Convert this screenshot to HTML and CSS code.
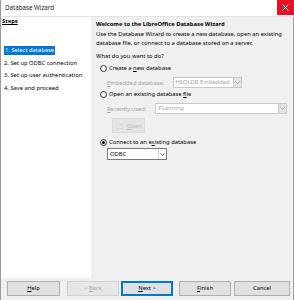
FILE: index.html
```html
<!DOCTYPE html>
<html>
<head>
<meta charset="utf-8">
<link rel="stylesheet" href="styles.css">
</head>
<body>
<div class="win">
  <div class="titlebar">
    <span class="title">Database Wizard</span>
    <div class="close"><svg width="7" height="7" viewBox="0 0 7 7"><path d="M0.5 0.5L6.5 6.5M6.5 0.5L0.5 6.5" stroke="#fff" stroke-width="1"/></svg></div>
  </div>
  <div class="main">
    <div class="steps">
      <div class="steps-h">Steps</div>
      <div class="step-list">
        <div class="step"><span class="sel">1. Select database</span></div>
        <div class="step">2. Set up ODBC connection</div>
        <div class="step">3. Set up user authentication</div>
        <div class="step">4. Save and proceed</div>
      </div>
    </div>
    <div class="page">
      <div class="h1">Welcome to the LibreOffice Database Wizard</div>
      <div class="desc">Use the Database Wizard to create a new database, open an existing database file, or connect to a database stored on a server.</div>
      <div class="what">What do you want to do?</div>
      <div class="radio r1"><span class="circ"></span><span>Create a <u>n</u>ew database</span></div>
      <div class="row row-emb">
        <span class="lbl dis"><u>E</u>mbedded database:</span>
        <div class="combo combo-dis combo-emb"><span class="val">HSQLDB Embedded</span><span class="arr"><svg width="5" height="3" viewBox="0 0 5 3"><path d="M0.3 0.3L2.5 2.5L4.7 0.3" fill="none" stroke="#9a9a9a" stroke-width="0.8"/></svg></span></div>
      </div>
      <div class="radio r2"><span class="circ"></span><span>Open an existing database <u>f</u>ile</span></div>
      <div class="row row-rec">
        <span class="lbl dis"><u>R</u>ecently used:</span>
        <div class="combo combo-dis combo-rec"><span class="val">PLanning</span><span class="arr"><svg width="5" height="3" viewBox="0 0 5 3"><path d="M0.3 0.3L2.5 2.5L4.7 0.3" fill="none" stroke="#9a9a9a" stroke-width="0.8"/></svg></span></div>
      </div>
      <div class="btn-open"><svg width="7" height="6" viewBox="0 0 7 6"><path d="M0.5 1V5.5H6.5V1.7H3.2L2.6 1H0.5Z" fill="#e8e8e8" stroke="#d4d4d4" stroke-width="0.6"/></svg><span><u>O</u>pen</span></div>
      <div class="radio r3"><span class="circ on"></span><span>Connect to an e<u>x</u>isting database</span></div>
      <div class="combo combo-odbc"><span class="val">ODBC</span><span class="arr"><svg width="5" height="3" viewBox="0 0 5 3"><path d="M0.3 0.3L2.5 2.5L4.7 0.3" fill="none" stroke="#505050" stroke-width="0.8"/></svg></span></div>
    </div>
  </div>
  <div class="footer">
    <div class="btn b-help"><span><u>H</u>elp</span></div>
    <div class="btn b-back dis-btn"><span>&lt; <u>B</u>ack</span></div>
    <div class="btn b-next"><span><u>N</u>ext &gt;</span></div>
    <div class="btn b-finish"><span><u>F</u>inish</span></div>
    <div class="btn b-cancel"><span>Cancel</span></div>
  </div>
</div>
</body>
</html>
```

FILE: styles.css
```css
* { box-sizing: border-box; }
html, body { margin: 0; padding: 0; }
body {
  font-family: "Noto Sans", "Open Sans", sans-serif;
  font-size: 5.8px;
  color: #000;
  background: #f0f0f0;
}
.win {
  width: 294px;
  height: 300px;
  background: #f0f0f0;
  display: flex;
  flex-direction: column;
}
.titlebar {
  height: 17px;
  background: #fff;
  border-bottom: 1px solid #e3e3e3;
  border-left: 1px solid #9a9a9a;
  display: flex;
  align-items: flex-start;
  justify-content: space-between;
}
.title {
  font-size: 6.2px;
  line-height: 16px;
  padding-left: 4px;
  color: #1a1a1a;
}
.close {
  width: 17px;
  height: 15px;
  background: #e81123;
  display: flex;
  align-items: center;
  justify-content: center;
}
.main {
  height: 261px;
  display: flex;
  border-left: 1px solid #9a9a9a;
  border-right: 1px solid #9a9a9a;
}
.steps {
  width: 90px;
  background: #fff;
  padding-left: 1px;
}
.steps-h {
  font-weight: bold;
  text-decoration: underline;
  line-height: 9px;
}
.step-list {
  margin-top: 20px;
  display: flex;
  flex-direction: column;
  gap: 3.7px;
  padding-left: 2px;
}
.step { line-height: 9px; white-space: nowrap; }
.sel { background: #0078d7; color: #fff; padding: 0 1px; display: inline-block; }
.page {
  flex: 1;
  padding-left: 5px;
  padding-right: 6px;
  display: flex;
  flex-direction: column;
  align-items: flex-start;
}
.h1 { font-weight: bold; line-height: 9px; margin-top: 3px; white-space: nowrap; }
.desc { line-height: 9px; margin-top: 1px; }
.what { line-height: 9px; margin-top: 4px; }
.radio {
  display: flex;
  align-items: center;
  gap: 2px;
  line-height: 9px;
  padding-left: 4px;
  white-space: nowrap;
}
.r1 { margin-top: 3px; }
.r2 { margin-top: 2px; }
.r3 { margin-top: 5px; }
.circ {
  width: 7px;
  height: 7px;
  border: 0.8px solid #333;
  border-radius: 50%;
  background: #fff;
  display: flex;
  align-items: center;
  justify-content: center;
}
.circ.on::after {
  content: "";
  width: 3.4px;
  height: 3.4px;
  border-radius: 50%;
  background: #000;
}
.row {
  display: flex;
  align-items: center;
  padding-left: 11px;
  height: 11px;
  white-space: nowrap;
  align-self: stretch;
}
.row-emb { margin-top: 4px; }
.row-rec { margin-top: 4px; }
.dis { color: #a3a3a3; }
.combo {
  height: 11px;
  display: flex;
  align-items: stretch;
  border: 1px solid #c8c8c8;
  background: #fff;
}
.combo .val { flex: 1; line-height: 9px; padding-left: 2px; white-space: nowrap; overflow: hidden; }
.combo .arr {
  width: 8px;
  border-left: 1px solid #c8c8c8;
  background: #e4e4e4;
  display: flex;
  align-items: center;
  justify-content: center;
}
.combo-dis .val { color: #a3a3a3; }
.combo-emb { width: 69px; margin-left: 8px; }
.combo-rec { flex: 1; margin-left: 9px; }
.btn-open {
  margin-top: 4px;
  margin-left: 16px;
  width: 33px;
  height: 15px;
  background: #e5e5e5;
  border: 1px solid #dadada;
  display: flex;
  align-items: center;
  gap: 4px;
  padding-left: 3px;
  color: #b8b8b8;
}
.combo-odbc {
  margin-top: 1px;
  margin-left: 11px;
  width: 60px;
  height: 12px;
  border-color: #7a7a7a;
}
.combo-odbc .val { line-height: 10px; }
.combo-odbc .arr { background: #fff; border-left-color: #d0d0d0; }
.footer {
  flex: 1;
  display: flex;
  align-items: flex-start;
  padding-top: 3px;
  padding-left: 6px;
  border-left: 1px solid #9a9a9a;
  border-right: 1px solid #9a9a9a;
}
.btn {
  height: 15px;
  background: #e1e1e1;
  border: 1px solid #adadad;
  display: flex;
  align-items: center;
  justify-content: center;
  line-height: 9px;
  white-space: pre;
}
.b-help { width: 53px; }
.b-back { width: 52px; margin-left: 7px; }
.b-next { width: 52px; margin-left: 2px; border-color: #0078d7; box-shadow: inset 0 0 0 1px #0078d7; }
.b-finish { width: 52px; margin-left: 6px; }
.b-cancel { width: 56px; margin-left: 3px; }
.dis-btn { background: #e6e6e6; border-color: #cfcfcf; color: #a8a8a8; }
```
